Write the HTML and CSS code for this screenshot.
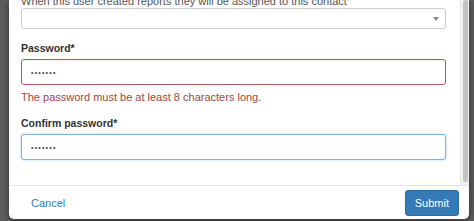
FILE: index.html
```html
<!DOCTYPE html>
<html lang="en">
<head>
  <meta charset="UTF-8">
  <title>Edit contact</title>
  <link rel="stylesheet" href="styles.css">
</head>
<body>
  <div class="modal">
    <div class="modal-body">
      <div class="form-area">
        <!-- assigned contact select (scrolled partly out of view) -->
        <div class="form-group first">
          <div class="hint">When this user created reports they will be assigned to this contact</div>
          <div class="select-box">
            <span class="caret"></span>
          </div>
        </div>

        <div class="form-group has-error">
          <label for="password">Password*</label>
          <input type="password" id="password" class="form-control" value="1234567">
          <div class="help-block">The password must be at least 8 characters long.</div>
        </div>

        <div class="form-group">
          <label for="confirm">Confirm password*</label>
          <input type="password" id="confirm" class="form-control focused" value="1234567">
        </div>
      </div>
      <div class="scrollbar"><div class="thumb"></div></div>
    </div>

    <div class="modal-footer">
      <a href="#" class="cancel">Cancel</a>
      <button class="btn-submit">Submit</button>
    </div>
  </div>
</body>
</html>
```

FILE: styles.css
```css
html, body {
  height: 100%;
}

body {
  margin: 0;
  background: #5e5e5e;
  font-family: 'Liberation Sans', Arial, sans-serif;
  font-size: 11px;
  color: #333;
  overflow: hidden;
  padding: 0 5px 0 9px;
}

.modal {
  width: 460px;
  background: #fff;
  border-radius: 0 0 5px 5px;
  box-shadow: 0 2px 8px rgba(0, 0, 0, 0.5);
}

.modal-body {
  display: flex;
  height: 185px;
  overflow: hidden;
}

.form-area {
  flex: 1;
  padding: 0 14px 0 12px;
}

.form-group {
  margin-bottom: 12px;
}

.form-group.first {
  margin-top: -6px;
}

.hint {
  color: #555;
  height: 14px;
  line-height: 14px;
  white-space: nowrap;
}

.select-box {
  height: 19px;
  border: 1px solid #ccc;
  border-radius: 3px;
  position: relative;
}

.caret {
  position: absolute;
  right: 6px;
  top: 8px;
  border-left: 3px solid transparent;
  border-right: 3px solid transparent;
  border-top: 4px solid #888;
}

label {
  display: block;
  font-weight: bold;
  color: #333;
  font-size: 10.5px;
  line-height: 14px;
  margin-bottom: 4px;
}

.form-control {
  display: block;
  box-sizing: border-box;
  width: 100%;
  height: 26px;
  padding: 0 9px;
  border: 1px solid #ccc;
  border-radius: 3px;
  font-family: 'Liberation Sans', Arial, sans-serif;
  font-size: 7px;
  letter-spacing: 1.2px;
  color: #444;
  outline: none;
}

.has-error .form-control {
  border-color: #b5585a;
  box-shadow: inset 0 1px 1px rgba(0, 0, 0, 0.05);
}

.help-block {
  color: #a94442;
  font-size: 11px;
  line-height: 14px;
  margin-top: 5px;
}

.form-control.focused {
  border-color: #7fb3de;
  box-shadow: 0 0 3px rgba(102, 175, 233, 0.5);
}

.scrollbar {
  width: 8px;
  background: #f1f1f1;
  border-left: 1px solid #e6e6e6;
  display: flex;
  justify-content: center;
}

.thumb {
  width: 5px;
  height: 182px;
  background: #c2c2c2;
  border-radius: 3px;
}

.modal-footer {
  display: flex;
  justify-content: space-between;
  align-items: center;
  border-top: 1px solid #e5e5e5;
  padding: 4px 10px 3px 22px;
}

.cancel {
  color: #337ab7;
  text-decoration: none;
  font-size: 11px;
}

.btn-submit {
  background: #337ab7;
  color: #fff;
  border: 1px solid #2e6da4;
  border-radius: 3px;
  font-family: 'Liberation Sans', Arial, sans-serif;
  font-size: 11px;
  height: 26px;
  padding: 0 9px;
}
```
